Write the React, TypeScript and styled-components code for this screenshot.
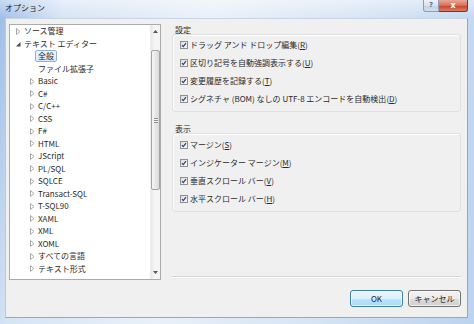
import React from 'react';
import styled, { createGlobalStyle } from 'styled-components';

const Global = createGlobalStyle`
  html, body { margin: 0; padding: 0; background: #ffffff; }
  body { font-family: "Noto Sans CJK JP", "Noto Sans", sans-serif; }
`;

const Window = styled.div`
  width: 474px;
  height: 324px;
  box-sizing: border-box;
  display: flex;
  flex-direction: column;
  overflow: hidden;
  background:
    linear-gradient(180deg, rgba(255,255,255,0.45) 0px, rgba(255,255,255,0) 18px),
    linear-gradient(100deg, #9dbde6 0%, #d6e4f5 12%, #e9f0f9 40%, #d6e4f4 70%, #bcd3ee 100%);
  font-family: "Noto Sans CJK JP", "Noto Sans", sans-serif;
  font-size: 8px;
  color: #222;
`;

const TitleBar = styled.div`
  height: 18px;
  flex: none;
  display: flex;
  justify-content: space-between;
  align-items: flex-start;
  padding: 0 6px 0 5px;
  box-sizing: border-box;
`;

const Title = styled.div`
  padding-top: 3px;
  line-height: 10px;
  font-size: 8px;
  color: #1b1b1b;
`;

const CaptionButtons = styled.div`
  display: flex;
`;

const CaptionButton = styled.div<{ $kind: 'help' | 'close' }>`
  height: 12px;
  box-sizing: border-box;
  display: flex;
  align-items: center;
  justify-content: center;
  width: ${p => (p.$kind === 'help' ? '16px' : '29px')};
  border: 1px solid ${p => (p.$kind === 'help' ? '#8b9cb3' : '#7a3328')};
  border-top: none;
  border-left-width: ${p => (p.$kind === 'help' ? '1px' : '0')};
  border-radius: ${p => (p.$kind === 'help' ? '0 0 0 3px' : '0 0 3px 0')};
  background: ${p =>
    p.$kind === 'help'
      ? 'linear-gradient(180deg, #edf2f8 0%, #d9e3ef 50%, #c3d1e3 51%, #d3dfed 100%)'
      : 'linear-gradient(180deg, #eaa89a 0%, #d66f5c 50%, #c8402a 51%, #dc7e63 100%)'};
  color: ${p => (p.$kind === 'help' ? '#5f6f86' : '#ffffff')};
  font-family: "DejaVu Sans", sans-serif;
  font-size: ${p => (p.$kind === 'help' ? '7px' : '8px')};
  font-weight: bold;
  line-height: 1;
`;

const Body = styled.div`
  flex: 1;
  margin: 0 6px 6px 5px;
  border: 1px solid #8fa9c8;
  border-top-color: #c9d6e6;
  border-left-color: #b5c9e0;
  background: #f0f0f0;
  padding: 5px 6px 0 3px;
  display: flex;
  flex-direction: column;
`;

const Main = styled.div`
  height: 256px;
  display: flex;
`;

const TreeBox = styled.div`
  width: 152px;
  height: 256px;
  box-sizing: border-box;
  border: 1px solid #ababab;
  background: #ffffff;
  display: flex;
  flex: none;
`;

const TreeList = styled.div`
  flex: 1;
  overflow: hidden;
`;

const TreeRow = styled.div<{ $level: number }>`
  height: 12.5px;
  display: flex;
  align-items: center;
  padding-left: ${p => 6 + p.$level * 14}px;
  white-space: nowrap;
  line-height: 10px;
  color: #2a2a2a;
`;

const Expander = styled.span`
  width: 8px;
  flex: none;
  display: flex;
  align-items: center;
`;

const ItemLabel = styled.span<{ $selected?: boolean }>`
  ${p =>
    p.$selected
      ? `
    margin-left: -3px;
    padding: 0 2px;
    border: 1px solid #8fb2dd;
    border-radius: 2px;
    background: linear-gradient(180deg, #f4f8fd 0%, #d9e8fa 100%);
  `
      : ''}
`;

const ScrollBar = styled.div`
  width: 10px;
  flex: none;
  display: flex;
  flex-direction: column;
  background: linear-gradient(90deg, #e8e8e8 0%, #f5f5f5 40%, #f5f5f5 100%);
  border-left: 1px solid #ededed;
  box-sizing: border-box;
`;

const ArrowButton = styled.div`
  height: 13px;
  display: flex;
  align-items: center;
  justify-content: center;
  flex: none;
`;

const Track = styled.div`
  flex: 1;
  display: flex;
  flex-direction: column;
`;

const Thumb = styled.div<{ $top: number; $height: number }>`
  margin-top: ${p => p.$top}px;
  height: ${p => p.$height}px;
  box-sizing: border-box;
  border: 1px solid #a4a4a4;
  border-radius: 2px;
  background: linear-gradient(90deg, #f5f5f5 0%, #e8e8e8 50%, #d9d9d9 100%);
  display: flex;
  align-items: center;
  justify-content: center;
`;

const Grip = styled.div`
  width: 4px;
  height: 5px;
  background: repeating-linear-gradient(180deg, #909090 0px, #909090 1px, #f4f4f4 1px, #f4f4f4 2px);
`;

const Pane = styled.div`
  flex: 1;
  margin-left: 11px;
  padding-top: 1px;
  display: flex;
  flex-direction: column;
`;

const GroupLabel = styled.div<{ $gap: number }>`
  margin-top: ${p => p.$gap}px;
  padding-left: 3px;
  line-height: 10px;
  height: 10px;
  color: #2a2a2a;
`;

const GroupBox = styled.div<{ $padTop: number }>`
  margin-top: -1px;
  border: 1px solid #e0e0e0;
  border-radius: 3px;
  box-shadow: inset 1px 1px 0 #ffffff;
  padding: ${p => p.$padTop}px 0 3px 7px;
  display: flex;
  flex-direction: column;
`;

const CheckRow = styled.div`
  height: 18px;
  display: flex;
  align-items: center;
  gap: 2px;
  white-space: nowrap;
  line-height: 10px;
  color: #2a2a2a;
`;

const Separator = styled.div`
  margin-top: auto;
  margin-bottom: 2px;
  height: 1px;
  background: #d6d6d6;
  border-bottom: 1px solid #ffffff;
`;

const Footer = styled.div`
  padding-top: 10px;
  display: flex;
  justify-content: flex-end;
  gap: 5px;
`;

const Button = styled.div<{ $default?: boolean }>`
  width: 53px;
  height: 17px;
  box-sizing: border-box;
  display: flex;
  align-items: center;
  justify-content: center;
  border-radius: 3px;
  border: 1px solid ${p => (p.$default ? '#3c7fb1' : '#707070')};
  background: ${p =>
    p.$default
      ? 'linear-gradient(180deg, #eaf6fd 0%, #d9f0fc 50%, #bee6fd 51%, #a7d9f5 100%)'
      : 'linear-gradient(180deg, #f2f2f2 0%, #ebebeb 50%, #dddddd 51%, #cfcfcf 100%)'};
  box-shadow: inset 0 0 0 1px rgba(255,255,255,0.7);
  line-height: 10px;
  color: #222;
`;

const Collapsed = () => (
  <svg width="5" height="7" viewBox="0 0 5 7">
    <path d="M0.5 0.5 L4 3.5 L0.5 6.5 Z" fill="#ffffff" stroke="#a9a9a9" strokeWidth="1" />
  </svg>
);

const Expanded = () => (
  <svg width="5" height="6" viewBox="0 0 5 6">
    <path d="M4.5 1 L4.5 5.5 L0 5.5 Z" fill="#4a4a4a" />
  </svg>
);

const ArrowGlyph = ({ dir }: { dir: 'up' | 'down' }) => (
  <svg width="5" height="3" viewBox="0 0 5 3">
    <path d={dir === 'up' ? 'M0 3 L2.5 0 L5 3 Z' : 'M0 0 L5 0 L2.5 3 Z'} fill="#555555" />
  </svg>
);

const CheckBox = () => (
  <svg width="8" height="8" viewBox="0 0 8 8" style={{ flex: 'none' }}>
    <defs>
      <linearGradient id="cbg" x1="0" y1="0" x2="1" y2="1">
        <stop offset="0" stopColor="#dcdcdc" />
        <stop offset="1" stopColor="#fbfbfb" />
      </linearGradient>
    </defs>
    <rect x="0.5" y="0.5" width="7" height="7" fill="url(#cbg)" stroke="#8e8f8f" />
    <path d="M2 4.1 L3.3 5.6 L6 2.1" fill="none" stroke="#2b3f78" strokeWidth="1.2" />
  </svg>
);

type Node = { label: string; level: number; arrow: 'collapsed' | 'expanded' | 'none'; selected?: boolean };

const langs = ['Basic', 'C#', 'C/C++', 'CSS', 'F#', 'HTML', 'JScript', 'PL/SQL', 'SQLCE', 'Transact-SQL', 'T-SQL90', 'XAML', 'XML', 'XOML', 'すべての言語', 'テキスト形式'];

const nodes: Node[] = [
  { label: 'ソース管理', level: 0, arrow: 'collapsed' },
  { label: 'テキスト エディター', level: 0, arrow: 'expanded' },
  { label: '全般', level: 1, arrow: 'none', selected: true },
  { label: 'ファイル拡張子', level: 1, arrow: 'none' },
  ...langs.map(l => ({ label: l, level: 1, arrow: 'collapsed' as const })),
];

type Opt = { text: string; key: string };

const settings: Opt[] = [
  { text: 'ドラッグ アンド ドロップ編集', key: 'R' },
  { text: '区切り記号を自動強調表示する', key: 'U' },
  { text: '変更履歴を記録する', key: 'T' },
  { text: 'シグネチャ (BOM) なしの UTF-8 エンコードを自動検出', key: 'D' },
];

const display: Opt[] = [
  { text: 'マージン', key: 'S' },
  { text: 'インジケーター マージン', key: 'M' },
  { text: '垂直スクロール バー', key: 'V' },
  { text: '水平スクロール バー', key: 'H' },
];

const Group = ({ label, items, gap, padTop }: { label: string; items: Opt[]; gap: number; padTop: number }) => (
  <>
    <GroupLabel $gap={gap}>{label}</GroupLabel>
    <GroupBox $padTop={padTop}>
      {items.map(o => (
        <CheckRow key={o.key}>
          <CheckBox />
          <span>
            {o.text}(<u>{o.key}</u>)
          </span>
        </CheckRow>
      ))}
    </GroupBox>
  </>
);

export default function App() {
  return (
    <>
      <Global />
      <Window>
        <TitleBar>
          <Title>オプション</Title>
          <CaptionButtons>
            <CaptionButton $kind="help">?</CaptionButton>
            <CaptionButton $kind="close">x</CaptionButton>
          </CaptionButtons>
        </TitleBar>
        <Body>
          <Main>
            <TreeBox>
              <TreeList>
                {nodes.map(n => (
                  <TreeRow key={n.label} $level={n.level}>
                    <Expander>
                      {n.arrow === 'collapsed' && <Collapsed />}
                      {n.arrow === 'expanded' && <Expanded />}
                    </Expander>
                    <ItemLabel $selected={n.selected}>{n.label}</ItemLabel>
                  </TreeRow>
                ))}
              </TreeList>
              <ScrollBar>
                <ArrowButton>
                  <ArrowGlyph dir="up" />
                </ArrowButton>
                <Track>
                  <Thumb $top={12} $height={140}>
                    <Grip />
                  </Thumb>
                </Track>
                <ArrowButton>
                  <ArrowGlyph dir="down" />
                </ArrowButton>
              </ScrollBar>
            </TreeBox>
            <Pane>
              <Group label="設定" items={settings} gap={0} padTop={1} />
              <Group label="表示" items={display} gap={12} padTop={2} />
              <Separator />
            </Pane>
          </Main>
          <Footer>
            <Button $default>OK</Button>
            <Button>キャンセル</Button>
          </Footer>
        </Body>
      </Window>
    </>
  );
}
